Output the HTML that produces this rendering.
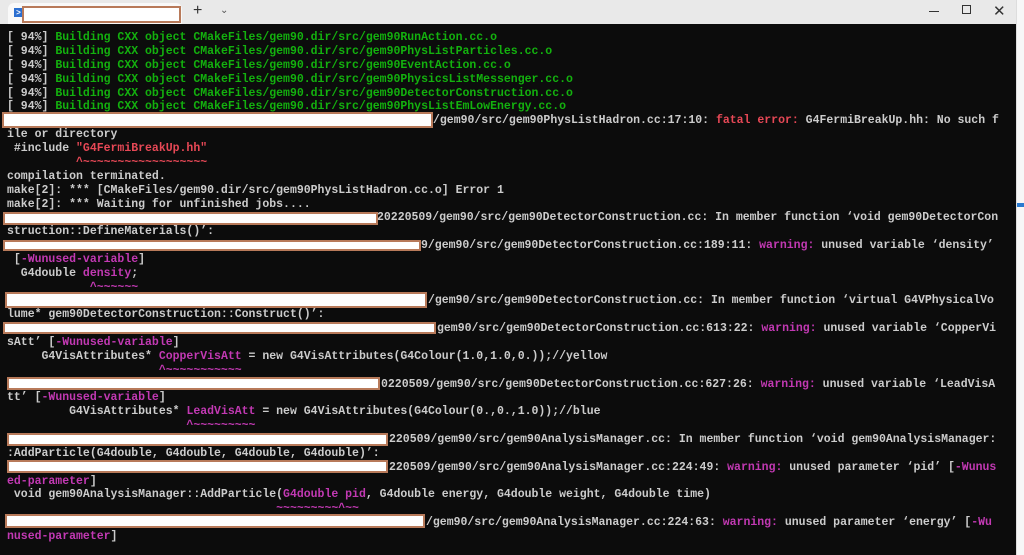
<!DOCTYPE html><html><head><meta charset="utf-8"><style>
*{margin:0;padding:0}
body{width:1024px;height:555px;overflow:hidden;background:#f3f3f3;position:relative;font-family:"Liberation Mono",monospace}
#tb{position:absolute;left:0;top:0;width:1016px;height:24px;background:#e9e9e9}
#tab{position:absolute;left:8px;top:3px;width:174px;height:21px;background:#f9f9f9;border-radius:6px 6px 0 0}
#term{position:absolute;left:0;top:24px;width:1016px;height:531px;background:#0c0c0c}
#rs{position:absolute;left:1016px;top:0;width:8px;height:555px;background:#f7f7f7;border-left:1px solid #ddd}
#t{position:absolute;left:0;top:1px;width:1005px;height:554px;overflow:hidden}
.l{position:absolute;left:7px;white-space:pre;font-size:11.5px;line-height:14px;color:#cccccc;font-weight:bold}
.g{color:#13b10e}.r{color:#e74856}.m{color:#c239b3}
.b{position:absolute;background:#fff;border:2px solid #b87a5a;box-sizing:border-box}
</style></head><body>
<div id="tb"><div id="tab"></div>
<div style="position:absolute;left:14px;top:8px;width:9px;height:9px;background:#2c6fd0;color:#fff;font:bold 8px 'Liberation Sans';line-height:9px;text-align:center">&gt;</div>
<div style="position:absolute;left:193px;top:2px;font:16px 'Liberation Sans';color:#333">+</div>
<div style="position:absolute;left:220px;top:5px;font:10px 'Liberation Sans';color:#555">⌄</div>
<div style="position:absolute;left:929px;top:11px;width:10px;height:1px;background:#333"></div>
<div style="position:absolute;left:962px;top:5px;width:7px;height:7px;border:1px solid #333"></div>
<div style="position:absolute;left:993px;top:2px;font:15px 'Liberation Sans';color:#333">✕</div>
</div>
<div class="b" style="left:22px;top:6px;width:159px;height:17px"></div>
<div id="term"></div>
<div id="rs"><div style="position:absolute;top:203px;left:0;width:8px;height:4px;background:#2a7ad0"></div></div>
<div id="t">
<div class="l" style="top:30px">[ 94%] <span class="g">Building CXX object CMakeFiles/gem90.dir/src/gem90RunAction.cc.o</span></div>
<div class="l" style="top:44px">[ 94%] <span class="g">Building CXX object CMakeFiles/gem90.dir/src/gem90PhysListParticles.cc.o</span></div>
<div class="l" style="top:58px">[ 94%] <span class="g">Building CXX object CMakeFiles/gem90.dir/src/gem90EventAction.cc.o</span></div>
<div class="l" style="top:72px">[ 94%] <span class="g">Building CXX object CMakeFiles/gem90.dir/src/gem90PhysicsListMessenger.cc.o</span></div>
<div class="l" style="top:86px">[ 94%] <span class="g">Building CXX object CMakeFiles/gem90.dir/src/gem90DetectorConstruction.cc.o</span></div>
<div class="l" style="top:99px">[ 94%] <span class="g">Building CXX object CMakeFiles/gem90.dir/src/gem90PhysListEmLowEnergy.cc.o</span></div>
<div class="l" style="top:113px;left:433px">/gem90/src/gem90PhysListHadron.cc:17:10: <span class="r">fatal error:</span> G4FermiBreakUp.hh: No such f</div>
<div class="l" style="top:127px">ile or directory</div>
<div class="l" style="top:141px"> #include <span class="r">"G4FermiBreakUp.hh"</span></div>
<div class="l r" style="top:155px">          ^~~~~~~~~~~~~~~~~~~</div>
<div class="l" style="top:169px">compilation terminated.</div>
<div class="l" style="top:183px">make[2]: *** [CMakeFiles/gem90.dir/src/gem90PhysListHadron.cc.o] Error 1</div>
<div class="l" style="top:197px">make[2]: *** Waiting for unfinished jobs....</div>
<div class="l" style="top:210px;left:377px">20220509/gem90/src/gem90DetectorConstruction.cc: In member function ‘void gem90DetectorCon</div>
<div class="l" style="top:224px">struction::DefineMaterials()’:</div>
<div class="l" style="top:238px;left:421px">9/gem90/src/gem90DetectorConstruction.cc:189:11: <span class="m">warning:</span> unused variable ‘density’</div>
<div class="l" style="top:252px"> [<span class="m">-Wunused-variable</span>]</div>
<div class="l" style="top:266px">  G4double <span class="m">density</span>;</div>
<div class="l m" style="top:280px">            ^~~~~~~</div>
<div class="l" style="top:293px;left:428px">/gem90/src/gem90DetectorConstruction.cc: In member function ‘virtual G4VPhysicalVo</div>
<div class="l" style="top:307px">lume* gem90DetectorConstruction::Construct()’:</div>
<div class="l" style="top:321px;left:437px">gem90/src/gem90DetectorConstruction.cc:613:22: <span class="m">warning:</span> unused variable ‘CopperVi</div>
<div class="l" style="top:335px">sAtt’ [<span class="m">-Wunused-variable</span>]</div>
<div class="l" style="top:349px">     G4VisAttributes* <span class="m">CopperVisAtt</span> = new G4VisAttributes(G4Colour(1.0,1.0,0.));//yellow</div>
<div class="l m" style="top:363px">                      ^~~~~~~~~~~~</div>
<div class="l" style="top:377px;left:381px">0220509/gem90/src/gem90DetectorConstruction.cc:627:26: <span class="m">warning:</span> unused variable ‘LeadVisA</div>
<div class="l" style="top:390px">tt’ [<span class="m">-Wunused-variable</span>]</div>
<div class="l" style="top:404px">         G4VisAttributes* <span class="m">LeadVisAtt</span> = new G4VisAttributes(G4Colour(0.,0.,1.0));//blue</div>
<div class="l m" style="top:418px">                          ^~~~~~~~~~</div>
<div class="l" style="top:432px;left:389px">220509/gem90/src/gem90AnalysisManager.cc: In member function ‘void gem90AnalysisManager:</div>
<div class="l" style="top:446px">:AddParticle(G4double, G4double, G4double, G4double)’:</div>
<div class="l" style="top:460px;left:389px">220509/gem90/src/gem90AnalysisManager.cc:224:49: <span class="m">warning:</span> unused parameter ‘pid’ [<span class="m">-Wunus</span></div>
<div class="l m" style="top:474px">ed-parameter<span style="color:#cccccc">]</span></div>
<div class="l" style="top:487px"> void gem90AnalysisManager::AddParticle(<span class="m">G4double pid</span>, G4double energy, G4double weight, G4double time)</div>
<div class="l m" style="top:501px">                                       ~~~~~~~~~^~~</div>
<div class="l" style="top:515px;left:426px">/gem90/src/gem90AnalysisManager.cc:224:63: <span class="m">warning:</span> unused parameter ‘energy’ [<span class="m">-Wu</span></div>
<div class="l m" style="top:529px">nused-parameter<span style="color:#cccccc">]</span></div>
</div>
<div class="b" style="left:2px;top:112px;width:431px;height:16px"></div>
<div class="b" style="left:3px;top:212px;width:375px;height:13px"></div>
<div class="b" style="left:3px;top:240px;width:418px;height:11px"></div>
<div class="b" style="left:5px;top:292px;width:422px;height:16px"></div>
<div class="b" style="left:3px;top:322px;width:433px;height:12px"></div>
<div class="b" style="left:7px;top:377px;width:373px;height:13px"></div>
<div class="b" style="left:7px;top:433px;width:381px;height:13px"></div>
<div class="b" style="left:7px;top:460px;width:381px;height:13px"></div>
<div class="b" style="left:5px;top:514px;width:420px;height:14px"></div>
</body></html>
